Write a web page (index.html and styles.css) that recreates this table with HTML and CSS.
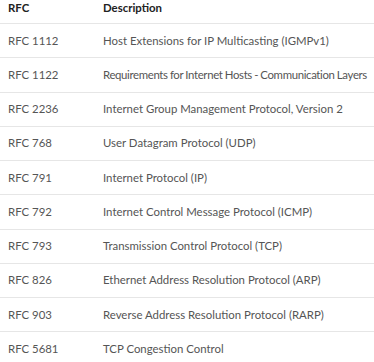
FILE: index.html
```html
<!DOCTYPE html>
<html>
<head>
<meta charset="utf-8">
<link rel="stylesheet" href="styles.css">
</head>
<body>
<table class="rfc-table">
  <thead>
    <tr><th class="col-rfc">RFC</th><th>Description</th></tr>
  </thead>
  <tbody>
    <tr><td>RFC 1112</td><td>Host Extensions for IP Multicasting (IGMPv1)</td></tr>
    <tr><td>RFC 1122</td><td class="tight">Requirements for Internet Hosts - Communication Layers</td></tr>
    <tr><td>RFC 2236</td><td>Internet Group Management Protocol, Version 2</td></tr>
    <tr><td>RFC 768</td><td>User Datagram Protocol (UDP)</td></tr>
    <tr><td>RFC 791</td><td>Internet Protocol (IP)</td></tr>
    <tr><td>RFC 792</td><td>Internet Control Message Protocol (ICMP)</td></tr>
    <tr><td>RFC 793</td><td>Transmission Control Protocol (TCP)</td></tr>
    <tr><td>RFC 826</td><td>Ethernet Address Resolution Protocol (ARP)</td></tr>
    <tr><td>RFC 903</td><td>Reverse Address Resolution Protocol (RARP)</td></tr>
    <tr><td>RFC 5681</td><td>TCP Congestion Control</td></tr>
  </tbody>
</table>
</body>
</html>
```
FILE: styles.css
```css
html, body {
  margin: 0;
  padding: 0;
  background: #fff;
}
.rfc-table {
  width: 374px;
  table-layout: fixed;
  border-collapse: collapse;
  font-family: Lato, "Noto Sans", sans-serif;
  font-size: 11.4px;
  color: #555;
}
.rfc-table th {
  text-align: left;
  font-weight: 700;
  color: #222;
  padding: 0 8px 7px;
  height: 16px;
  line-height: 16px;
  vertical-align: top;
  border-bottom: 1px solid #e6e6e6;
}
.rfc-table .col-rfc {
  width: 79px;
}
.rfc-table td {
  padding: 0 8px;
  height: 33.25px;
  line-height: 16px;
  vertical-align: middle;
  border-bottom: 1px solid #e6e6e6;
  white-space: nowrap;
}
.rfc-table td.tight {
  letter-spacing: -0.35px;
  word-spacing: -0.3px;
}
```
